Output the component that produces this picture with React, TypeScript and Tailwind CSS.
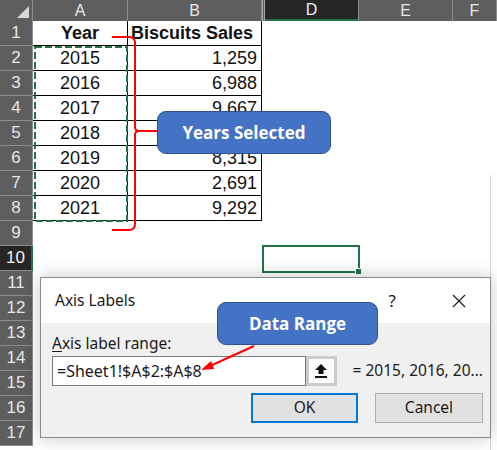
import React from "react";

const COLS = [
  { key: "A", cls: "w-[95px]" },
  { key: "B", cls: "w-[134px]" },
  { key: "C", cls: "w-[3px]" },
  { key: "D", cls: "w-[94px]" },
  { key: "E", cls: "w-[94px]" },
  { key: "F", cls: "flex-1" },
];

// row 5's sales value sits under the callout, so it is left blank
const DATA: [string, string][] = [
  ["2015", "1,259"],
  ["2016", "6,988"],
  ["2017", "9,667"],
  ["2018", ""],
  ["2019", "8,315"],
  ["2020", "2,691"],
  ["2021", "9,292"],
];

const ROWS = Array.from({ length: 17 }, (_, i) => i + 1);

function ColumnHeader() {
  return (
    <div className="flex h-[21px] bg-[#5e5e5e]">
      <div className="relative w-[33px] shrink-0 border-r border-[#8c8c8c]">
        <svg className="absolute bottom-[3px] right-[3px]" width="12" height="12" viewBox="0 0 12 12">
          <polygon points="12,0 12,12 0,12" fill="#d9d9d9" />
        </svg>
      </div>
      {COLS.map((c) =>
        c.key === "C" ? (
          <div key={c.key} className="w-[3px] shrink-0 border-x border-[#a8a8a8] bg-[#5e5e5e]" />
        ) : (
          <div
            key={c.key}
            className={`${c.cls} shrink-0 flex items-center justify-center text-[16px] border-r border-[#8c8c8c] ${
              c.key === "D"
                ? "bg-[#262626] text-[#f0f0f0] border-b-2 border-b-[#217346]"
                : "text-[#e6e6e6]"
            }`}
          >
            {c.key}
          </div>
        )
      )}
    </div>
  );
}

function SheetRow({ n }: { n: number }) {
  const inTable = n <= 8;
  const d = n >= 2 && n <= 8 ? DATA[n - 2] : null;
  return (
    <div className="flex h-[25px]">
      <div
        className={`w-[33px] shrink-0 flex items-center justify-center text-[17px] border-b border-[#8c8c8c] ${
          n === 10
            ? "bg-[#262626] text-[#f0f0f0] border-r-2 border-r-[#217346]"
            : "bg-[#5e5e5e] text-[#e6e6e6] border-r border-r-[#8c8c8c]"
        }`}
      >
        {n}
      </div>
      <div
        className={`w-[95px] shrink-0 flex items-center justify-center text-[18px] ${
          inTable ? "border-b border-r border-black" : ""
        } ${n === 1 ? "font-bold" : ""}`}
      >
        {n === 1 ? "Year" : d ? d[0] : ""}
      </div>
      <div
        className={`w-[134px] shrink-0 flex items-center text-[18px] whitespace-nowrap overflow-hidden ${
          inTable ? "border-b border-r border-black" : ""
        } ${n === 1 ? "font-bold justify-start pl-[3px]" : "justify-end pr-[4px]"}`}
      >
        {n === 1 ? "Biscuits Sales" : d ? d[1] : ""}
      </div>
      <div className="w-[3px] shrink-0" />
      <div className="w-[94px] shrink-0" />
      <div className="w-[94px] shrink-0" />
      <div className="flex-1" />
    </div>
  );
}

function Dialog() {
  return (
    <div className="absolute left-[40px] top-[277px] w-[451px] h-[161px] flex flex-col border border-[#8a8a8a] bg-[#f0f0f0] shadow-[0_0_18px_rgba(0,0,0,0.22)] font-['Noto_Sans',sans-serif] text-[#1a1a1a]">
      <div className="h-[45px] bg-white flex items-center pl-[14px] pr-[20px]">
        <span className="text-[15.5px]">Axis Labels</span>
        <span className="ml-auto text-[17px] mr-[56px]">?</span>
        <svg width="14" height="14" viewBox="0 0 14 14" className="mr-[4px]">
          <path d="M1 1 L13 13 M13 1 L1 13" stroke="#222" strokeWidth="1.3" />
        </svg>
      </div>
      <div className="flex-1 flex flex-col pl-[11px] pr-[7px]">
        <div className="mt-[9px] text-[15.5px] leading-[22px]">
          <span className="underline underline-offset-2">A</span>xis label range:
        </div>
        <div className="mt-[2px] flex items-center">
          <div className="w-[263px] h-[30px] border border-[#7a7a7a] bg-white flex items-center pl-[4px] text-[16px]">
            =Sheet1!$A$2:$A$8
          </div>
          <div className="w-[32px] h-[30px] border-[3px] border-[#cccccc] bg-white flex items-center justify-center">
            <svg width="14" height="16" viewBox="0 0 14 16">
              <path d="M7 1 L13 7 L9.5 7 L9.5 11 L4.5 11 L4.5 7 L1 7 Z" fill="#111" />
              <rect x="1" y="13" width="12" height="2" fill="#111" />
            </svg>
          </div>
          <span className="ml-[16px] text-[15.5px] whitespace-nowrap">= 2015, 2016, 20...</span>
        </div>
        <div className="mt-[7px] flex justify-end gap-[17px]">
          <div className="w-[107px] h-[30px] border-2 border-[#0078d7] bg-[#e1e1e1] flex items-center justify-center text-[15.5px]">
            OK
          </div>
          <div className="w-[108px] h-[30px] border border-[#adadad] bg-[#e1e1e1] flex items-center justify-center text-[15.5px]">
            Cancel
          </div>
        </div>
      </div>
    </div>
  );
}

export default function App() {
  return (
    <div className="relative w-[497px] h-[450px] overflow-hidden bg-white font-['Liberation_Sans',Arial,sans-serif] text-[#111]">
      <ColumnHeader />
      {ROWS.map((n) => (
        <SheetRow key={n} n={n} />
      ))}

      {/* chart edge on the right */}
      <div className="absolute left-[490px] top-[175px] bottom-0 w-px bg-[#d4d4d4]" />

      {/* active cell D10 */}
      <div className="absolute left-[262px] top-[245px] w-[98px] h-[28px] border-2 border-[#217346]">
        <div className="absolute -right-[4px] -bottom-[4px] w-[7px] h-[7px] bg-[#217346] border border-white" />
      </div>

      {/* copy marquee + bracket */}
      <svg className="absolute left-0 top-0 pointer-events-none" width="497" height="450">
        <rect x="35" y="47" width="92" height="174" fill="none" stroke="#217346" strokeWidth="2" strokeDasharray="7 3" />
        <path
          d="M112 37 L129 37 Q135 37 135 43 L135 127 Q135 131 139 131 Q135 131 135 135 L135 224 Q135 230 129 230 L112 230"
          fill="none"
          stroke="#ff0000"
          strokeWidth="2"
        />
        <path d="M139 131 L158 131" stroke="#ff0000" strokeWidth="2" />
      </svg>

      <div className="absolute left-[157px] top-[111px] w-[174px] h-[43px] rounded-[9px] bg-[#4472c4] border border-[#2f528f] flex items-center justify-center text-white font-bold text-[17px] font-['Open_Sans',sans-serif]">
        Years Selected
      </div>

      <Dialog />

      <div className="absolute left-[217px] top-[302px] w-[161px] h-[43px] rounded-[9px] bg-[#4472c4] border border-[#2f528f] flex items-center justify-center text-white font-bold text-[17px] font-['Open_Sans',sans-serif]">
        Data Range
      </div>

      <svg className="absolute left-0 top-0 pointer-events-none" width="497" height="450">
        <path d="M254 346 L210 366" stroke="#ff0000" strokeWidth="2" />
        <polygon points="201,370 211,361 214,369" fill="#ff0000" />
      </svg>
    </div>
  );
}
